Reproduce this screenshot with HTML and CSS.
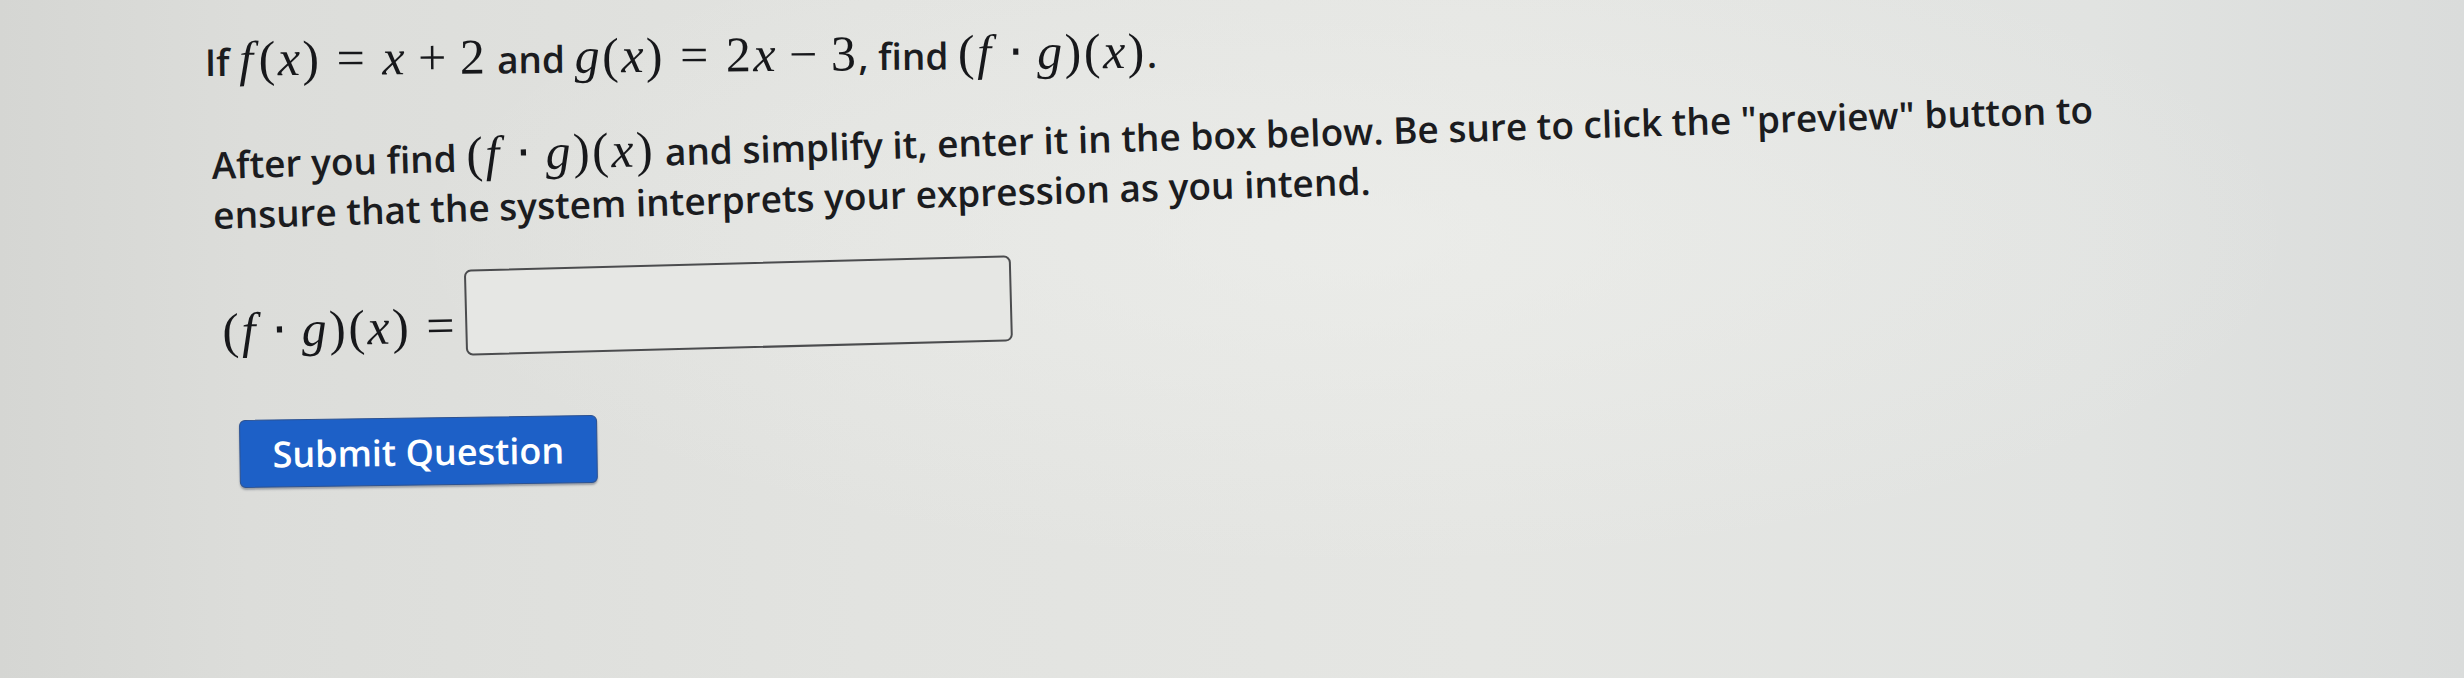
FILE: index.html
```html
<!DOCTYPE html>
<html lang="en">
<head>
<meta charset="utf-8">
<title>Question</title>
<link rel="stylesheet" href="styles.css">
</head>
<body>
<div class="page">
  <p class="q1">If <span class="m"><i class="f">f</i>(<i>x</i>)<span class="rel">=</span><i>x</i><span class="bin">+</span>2</span> and <span class="m"><i>g</i>(<i>x</i>)<span class="rel">=</span>2<i>x</i><span class="bin">−</span>3</span>, find <span class="m">(<i class="f">f</i><span class="bin">⋅</span><i>g</i>)(<i>x</i>)</span>.</p>
  <p class="q2">After you find <span class="m">(<i class="f">f</i><span class="bin">⋅</span><i>g</i>)(<i>x</i>)</span> and simplify it, enter it in the box below. Be sure to click the "preview" button to<br>ensure that the system interprets your expression as you intend.</p>
  <div class="answer">
    <span class="m label">(<i class="f">f</i><span class="bin">⋅</span><i>g</i>)(<i>x</i>)<span class="rel last">=</span></span>
    <input class="box" type="text" aria-label="answer">
  </div>
  <button class="submit" type="button">Submit Question</button>
</div>
</body>
</html>
```

FILE: styles.css
```css
html, body {
  margin: 0;
  padding: 0;
  height: 100%;
}
body {
  background:
    radial-gradient(ellipse 55% 70% at 55% 35%, rgba(240,241,238,0.55), rgba(240,241,238,0) 70%),
    linear-gradient(90deg, #d5d6d3 0%, #dcddda 10%, #e2e3e0 35%, #e5e6e3 60%, #e1e3e1 85%, #dadcdb 100%);
  font-family: "Open Sans", "DejaVu Sans", sans-serif;
  color: #1b1c1f;
  overflow: hidden;
}
.page {
  padding-top: 34px;
}
p {
  margin: 0;
}
.q1, .q2 {
  font-size: 37px;
  font-weight: 600;
  line-height: 50px;
  white-space: nowrap;
  transform-origin: 0 39px;
}
.q1 {
  margin-left: 205px;
  transform: rotate(-0.5deg);
}
.q2 {
  margin-top: 50px;
  margin-left: 212px;
  transform: rotate(-1.7deg);
}
.q2 .line3 {
  letter-spacing: -0.01em;
}
.m {
  font-family: "Liberation Serif", "Times New Roman", serif;
  font-size: 50px;
  font-weight: 400;
  letter-spacing: 0.05em;
  color: #17181b;
}
.m i {
  font-style: italic;
}
.m i.f {
  margin-right: 0.06em;
}
.rel {
  margin: 0 0.3em;
}
.bin {
  margin: 0 0.222em;
}
.answer {
  margin-top: 36px;
  margin-left: 222px;
  display: flex;
  align-items: flex-start;
  gap: 8px;
  transform-origin: 0 40px;
  transform: rotate(-1.5deg);
}
.label {
  margin-top: 30px;
  line-height: 50px;
  white-space: nowrap;
}
.rel.last {
  margin-right: 0;
}
.box {
  width: 547px;
  height: 86px;
  box-sizing: border-box;
  border: 2.5px solid #4b4c4e;
  border-radius: 7px;
  background: #e6e7e4;
  margin: 0;
  padding: 0;
}
.submit {
  display: block;
  margin-top: 58px;
  margin-left: 239px;
  height: 68px;
  padding: 0 32px;
  background: #1d60c7;
  color: #ffffff;
  border: 1px solid #2d5291;
  border-radius: 6px;
  box-shadow: 0 2px 2px rgba(70, 80, 100, 0.45);
  font-family: "Open Sans", "DejaVu Sans", sans-serif;
  font-size: 36px;
  font-weight: 600;
  transform-origin: 0 0;
  transform: rotate(-0.8deg);
}
```
